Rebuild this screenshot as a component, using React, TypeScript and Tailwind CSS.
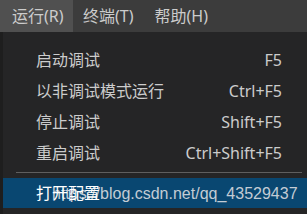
import React from "react";

const items = [
  { label: "启动调试", key: "F5" },
  { label: "以非调试模式运行", key: "Ctrl+F5" },
  { label: "停止调试", key: "Shift+F5" },
  { label: "重启调试", key: "Ctrl+Shift+F5" },
];

export default function App() {
  return (
    <div
      className="relative w-[307px] h-[214px] overflow-hidden bg-[#252526] text-[16px] text-[#cccccc]"
      style={{ fontFamily: '"Noto Sans", "Noto Sans CJK SC", sans-serif' }}
    >
      <div className="flex h-[32px] bg-[#3c3c3c] items-stretch">
        <div className="flex w-[73px] items-center pl-[12px] bg-[#505050]">运行(R)</div>
        <div className="flex items-center pl-[10px]">终端(T)</div>
        <div className="flex items-center pl-[21px]">帮助(H)</div>
      </div>
      <div className="flex h-[182px]">
        <div className="w-[3px] bg-[#1e1e1e]" />
        <div className="flex-1 flex flex-col pt-[12px]">
          {items.map((it) => (
            <div key={it.label} className="flex h-[31px] items-center justify-between pl-[33px] pr-[25px]">
              <span>{it.label}</span>
              <span>{it.key}</span>
            </div>
          ))}
          <div className="mt-[4px] mb-[5px] ml-[13px] mr-[5px] h-px bg-[#5f5f5f]" />
          <div className="relative flex h-[30px] items-center bg-[#094771] pl-[33px]">
            <span
              className="absolute left-[49px] top-[4px] text-[16px] text-[#c3ccd5]"
              style={{ fontFamily: '"Liberation Sans", Arial, sans-serif' }}
            >
              https://blog.csdn.net/qq_43529437
            </span>
            <span className="relative text-white">打开配置</span>
          </div>
        </div>
      </div>
    </div>
  );
}
